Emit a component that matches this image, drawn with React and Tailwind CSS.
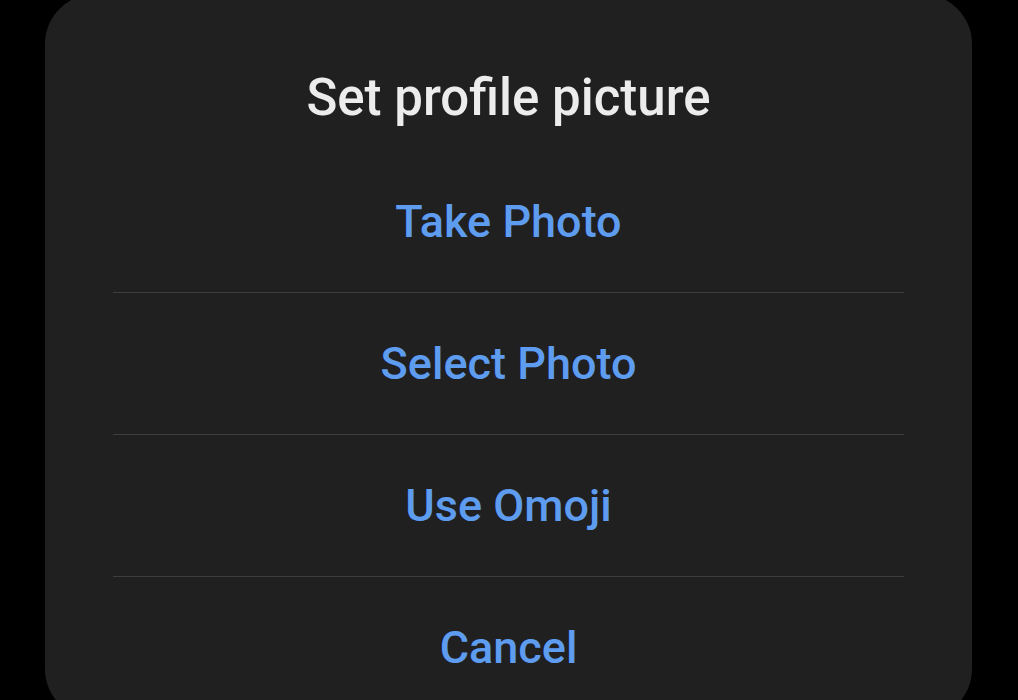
import React from 'react';

const options = ['Take Photo', 'Select Photo', 'Use Omoji', 'Cancel'];

const App = () => {
  return (
    <div className="h-[700px] w-[1018px] overflow-hidden bg-black" style={{ fontFamily: 'Roboto, "Noto Sans", sans-serif' }}>
      {/* Sheet */}
      <div className="mx-[45px] mt-[-6px] w-[927px] rounded-[50px] bg-[#202020] pt-[74px]">
        <h1 className="mb-[23px] text-center text-[51px] font-medium leading-[60px] text-[#ececec]">
          Set profile picture
        </h1>
        <div className="px-[68px]">
          {options.map((label, i) => (
            <div
              key={label}
              className={
                i < options.length - 1
                  ? 'flex h-[142px] items-center justify-center border-b border-[#3d3d3d]'
                  : 'flex h-[142px] items-center justify-center'
              }
            >
              <span className="text-[45px] font-medium leading-[52px] text-[#5e9cf0]">{label}</span>
            </div>
          ))}
        </div>
      </div>
    </div>
  );
};

export default App;
